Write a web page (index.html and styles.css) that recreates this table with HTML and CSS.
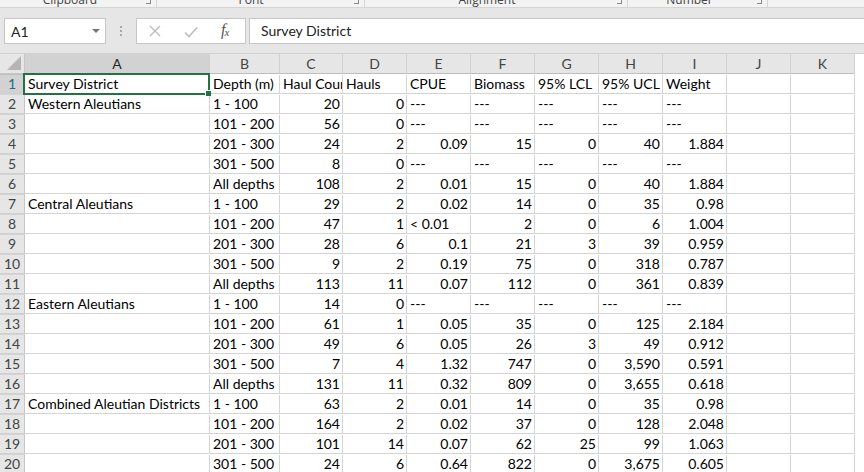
FILE: index.html
```html
<!DOCTYPE html>
<html>
<head>
<meta charset="utf-8">
<link rel="stylesheet" href="styles.css">
</head>
<body>
<div class="ribbon">
  <div class="grp g1"><span class="lbl">Clipboard</span><span class="launch"></span></div>
  <div class="grp g2"><span class="lbl">Font</span><span class="launch"></span></div>
  <div class="grp g3"><span class="lbl">Alignment</span><span class="launch"></span></div>
  <div class="grp g4"><span class="lbl">Number</span><span class="launch"></span></div>
</div>
<div class="fbar">
  <div class="namebox"><span>A1</span>
    <svg class="dd" width="8" height="5" viewBox="0 0 8 5"><polygon points="0,0 8,0 4,4" fill="#777"/></svg>
  </div>
  <div class="dots"><i></i><i></i><i></i></div>
  <div class="iconbox">
    <svg class="ic-x" width="12" height="12" viewBox="0 0 12 12"><path d="M1 1 L11 11 M11 1 L1 11" stroke="#bdbdbd" stroke-width="1.4" fill="none"/></svg>
    <svg class="ic-ok" width="14" height="12" viewBox="0 0 14 12"><path d="M1 6.5 L5 10.5 L13 1.5" stroke="#bdbdbd" stroke-width="1.6" fill="none"/></svg>
    <span class="fx">f<sub>x</sub></span>
  </div>
  <div class="finput">Survey District</div>
</div>
<div class="sheet">
  <div class="row hdr">
    <div class="corner"><svg width="14" height="14" viewBox="0 0 14 14"><polygon points="14,0 14,14 0,14" fill="#b4b4b4"/></svg></div>
    <div class="ch sel">A</div><div class="ch">B</div><div class="ch">C</div><div class="ch">D</div><div class="ch">E</div><div class="ch">F</div><div class="ch">G</div><div class="ch">H</div><div class="ch">I</div><div class="ch">J</div><div class="ch">K</div><div class="ch"></div>
  </div>
  <div class="row"><div class="rh selr">1</div><div class="c active">Survey District<span class="selbox"><span class="handle"></span></span></div><div class="c">Depth (m)</div><div class="c">Haul Count</div><div class="c">Hauls</div><div class="c">CPUE</div><div class="c">Biomass</div><div class="c">95% LCL</div><div class="c">95% UCL</div><div class="c">Weight</div><div class="c"></div><div class="c"></div><div class="c"></div></div>
  <div class="row"><div class="rh">2</div><div class="c">Western Aleutians</div><div class="c">1 - 100</div><div class="c n">20</div><div class="c n">0</div><div class="c">---</div><div class="c">---</div><div class="c">---</div><div class="c">---</div><div class="c">---</div><div class="c"></div><div class="c"></div><div class="c"></div></div>
  <div class="row"><div class="rh">3</div><div class="c"></div><div class="c">101 - 200</div><div class="c n">56</div><div class="c n">0</div><div class="c">---</div><div class="c">---</div><div class="c">---</div><div class="c">---</div><div class="c">---</div><div class="c"></div><div class="c"></div><div class="c"></div></div>
  <div class="row"><div class="rh">4</div><div class="c"></div><div class="c">201 - 300</div><div class="c n">24</div><div class="c n">2</div><div class="c n">0.09</div><div class="c n">15</div><div class="c n">0</div><div class="c n">40</div><div class="c n">1.884</div><div class="c"></div><div class="c"></div><div class="c"></div></div>
  <div class="row"><div class="rh">5</div><div class="c"></div><div class="c">301 - 500</div><div class="c n">8</div><div class="c n">0</div><div class="c">---</div><div class="c">---</div><div class="c">---</div><div class="c">---</div><div class="c">---</div><div class="c"></div><div class="c"></div><div class="c"></div></div>
  <div class="row"><div class="rh">6</div><div class="c"></div><div class="c">All depths</div><div class="c n">108</div><div class="c n">2</div><div class="c n">0.01</div><div class="c n">15</div><div class="c n">0</div><div class="c n">40</div><div class="c n">1.884</div><div class="c"></div><div class="c"></div><div class="c"></div></div>
  <div class="row"><div class="rh">7</div><div class="c">Central Aleutians</div><div class="c">1 - 100</div><div class="c n">29</div><div class="c n">2</div><div class="c n">0.02</div><div class="c n">14</div><div class="c n">0</div><div class="c n">35</div><div class="c n">0.98</div><div class="c"></div><div class="c"></div><div class="c"></div></div>
  <div class="row"><div class="rh">8</div><div class="c"></div><div class="c">101 - 200</div><div class="c n">47</div><div class="c n">1</div><div class="c">&lt; 0.01</div><div class="c n">2</div><div class="c n">0</div><div class="c n">6</div><div class="c n">1.004</div><div class="c"></div><div class="c"></div><div class="c"></div></div>
  <div class="row"><div class="rh">9</div><div class="c"></div><div class="c">201 - 300</div><div class="c n">28</div><div class="c n">6</div><div class="c n">0.1</div><div class="c n">21</div><div class="c n">3</div><div class="c n">39</div><div class="c n">0.959</div><div class="c"></div><div class="c"></div><div class="c"></div></div>
  <div class="row"><div class="rh">10</div><div class="c"></div><div class="c">301 - 500</div><div class="c n">9</div><div class="c n">2</div><div class="c n">0.19</div><div class="c n">75</div><div class="c n">0</div><div class="c n">318</div><div class="c n">0.787</div><div class="c"></div><div class="c"></div><div class="c"></div></div>
  <div class="row"><div class="rh">11</div><div class="c"></div><div class="c">All depths</div><div class="c n">113</div><div class="c n">11</div><div class="c n">0.07</div><div class="c n">112</div><div class="c n">0</div><div class="c n">361</div><div class="c n">0.839</div><div class="c"></div><div class="c"></div><div class="c"></div></div>
  <div class="row"><div class="rh">12</div><div class="c">Eastern Aleutians</div><div class="c">1 - 100</div><div class="c n">14</div><div class="c n">0</div><div class="c">---</div><div class="c">---</div><div class="c">---</div><div class="c">---</div><div class="c">---</div><div class="c"></div><div class="c"></div><div class="c"></div></div>
  <div class="row"><div class="rh">13</div><div class="c"></div><div class="c">101 - 200</div><div class="c n">61</div><div class="c n">1</div><div class="c n">0.05</div><div class="c n">35</div><div class="c n">0</div><div class="c n">125</div><div class="c n">2.184</div><div class="c"></div><div class="c"></div><div class="c"></div></div>
  <div class="row"><div class="rh">14</div><div class="c"></div><div class="c">201 - 300</div><div class="c n">49</div><div class="c n">6</div><div class="c n">0.05</div><div class="c n">26</div><div class="c n">3</div><div class="c n">49</div><div class="c n">0.912</div><div class="c"></div><div class="c"></div><div class="c"></div></div>
  <div class="row"><div class="rh">15</div><div class="c"></div><div class="c">301 - 500</div><div class="c n">7</div><div class="c n">4</div><div class="c n">1.32</div><div class="c n">747</div><div class="c n">0</div><div class="c n">3,590</div><div class="c n">0.591</div><div class="c"></div><div class="c"></div><div class="c"></div></div>
  <div class="row"><div class="rh">16</div><div class="c"></div><div class="c">All depths</div><div class="c n">131</div><div class="c n">11</div><div class="c n">0.32</div><div class="c n">809</div><div class="c n">0</div><div class="c n">3,655</div><div class="c n">0.618</div><div class="c"></div><div class="c"></div><div class="c"></div></div>
  <div class="row"><div class="rh">17</div><div class="c">Combined Aleutian Districts</div><div class="c">1 - 100</div><div class="c n">63</div><div class="c n">2</div><div class="c n">0.01</div><div class="c n">14</div><div class="c n">0</div><div class="c n">35</div><div class="c n">0.98</div><div class="c"></div><div class="c"></div><div class="c"></div></div>
  <div class="row"><div class="rh">18</div><div class="c"></div><div class="c">101 - 200</div><div class="c n">164</div><div class="c n">2</div><div class="c n">0.02</div><div class="c n">37</div><div class="c n">0</div><div class="c n">128</div><div class="c n">2.048</div><div class="c"></div><div class="c"></div><div class="c"></div></div>
  <div class="row"><div class="rh">19</div><div class="c"></div><div class="c">201 - 300</div><div class="c n">101</div><div class="c n">14</div><div class="c n">0.07</div><div class="c n">62</div><div class="c n">25</div><div class="c n">99</div><div class="c n">1.063</div><div class="c"></div><div class="c"></div><div class="c"></div></div>
  <div class="row"><div class="rh">20</div><div class="c"></div><div class="c">301 - 500</div><div class="c n">24</div><div class="c n">6</div><div class="c n">0.64</div><div class="c n">822</div><div class="c n">0</div><div class="c n">3,675</div><div class="c n">0.605</div><div class="c"></div><div class="c"></div><div class="c"></div></div>
</div>
</body>
</html>
```
FILE: styles.css
```css
html, body {
  margin: 0;
  padding: 0;
  width: 864px;
  height: 472px;
  overflow: hidden;
  background: #ffffff;
  font-family: "Lato", "Liberation Sans", sans-serif;
}

/* ribbon bottom strip */
.ribbon {
  height: 7px;
  background: #f3f3f3;
  border-bottom: 1px solid #d5d5d5;
  display: flex;
  overflow: hidden;
}
.grp {
  position: relative;
  height: 7px;
  border-right: 1px solid #d5d5d5;
  box-sizing: border-box;
  display: flex;
  justify-content: center;
}
.g1 { width: 157px; }
.g2 { width: 208px; }
.g3 { width: 263px; }
.g4 { width: 140px; }
.lbl {
  font-family: "Open Sans", sans-serif;
  font-size: 12px;
  line-height: 12px;
  color: #444;
  margin-top: -6px;
}
.g1 .lbl { margin-right: 16px; }
.g2 .lbl { margin-right: 19px; }
.g3 .lbl { margin-right: 18px; }
.g4 .lbl { margin-right: 16px; }
.launch {
  position: absolute;
  right: 5px;
  top: 0;
  width: 4px;
  height: 3px;
  border-right: 1px solid #888;
  border-bottom: 1px solid #888;
}

/* formula bar */
.fbar {
  height: 45px;
  background: #e6e6e6;
  box-sizing: border-box;
  padding: 10px 0 9px 4px;
  display: flex;
  align-items: stretch;
}
.namebox {
  width: 102px;
  height: 26px;
  box-sizing: border-box;
  background: #fff;
  border: 1px solid #c6c6c6;
  display: flex;
  align-items: center;
  justify-content: space-between;
  padding: 0 5px 0 6px;
  font-size: 14px;
  color: #222;
}
.dd { margin-top: 1px; }
.dots {
  width: 30px;
  display: flex;
  flex-direction: column;
  align-items: center;
  justify-content: center;
  gap: 2px;
}
.dots i {
  display: block;
  width: 2px;
  height: 2px;
  background: #a8a8a8;
}
.iconbox {
  width: 110px;
  height: 26px;
  box-sizing: border-box;
  background: #fff;
  border: 1px solid #c6c6c6;
  display: flex;
  align-items: center;
  padding-left: 12px;
}
.ic-x { margin-right: 23px; }
.ic-ok { margin-right: 23px; margin-top: 1px; }
.fx {
  font-family: "Liberation Serif", serif;
  font-style: italic;
  font-size: 16px;
  color: #555;
  line-height: 16px;
  letter-spacing: -1px;
}
.fx sub {
  font-size: 11px;
  vertical-align: -1px;
}
.finput {
  flex: 1;
  margin-left: 3px;
  height: 26px;
  box-sizing: border-box;
  background: #fff;
  border: 1px solid #c6c6c6;
  border-right: none;
  padding-left: 11px;
  font-size: 14px;
  line-height: 24px;
  color: #222;
}

/* sheet */
.sheet {
  width: 919px;
}
.row {
  display: grid;
  grid-template-columns: 25px 185px 70px 63px 64px 64px 64px 64px 64px 64px 64px 64px;
  height: 20px;
}
.row.hdr {
  height: 21px;
  border-top: 1px solid #d0d0d0;
}
.corner {
  background: #e6e6e6;
  border-right: 1px solid #c6c6c6;
  border-bottom: 1px solid #c6c6c6;
  box-sizing: border-box;
  display: flex;
  align-items: flex-end;
  justify-content: flex-end;
  padding: 0 3px 3px 0;
}
.ch {
  background: #e6e6e6;
  border-right: 1px solid #d0d0d0;
  border-bottom: 1px solid #bdbdbd;
  box-sizing: border-box;
  text-align: center;
  font-size: 14px;
  line-height: 19px;
  color: #444;
}
.ch.sel {
  background: #d2d2d2;
  color: #262626;
}
.rh {
  background: #e6e6e6;
  border-right: 1px solid #c6c6c6;
  border-bottom: 1px solid #d0d0d0;
  box-sizing: border-box;
  text-align: center;
  font-size: 14px;
  line-height: 18px;
  color: #444;
}
.rh.selr {
  background: #d2d2d2;
  color: #1d6b8f;
}
.c {
  border-right: 1px solid #d4d4d4;
  border-bottom: 1px solid #d4d4d4;
  box-sizing: border-box;
  padding: 0 2px 0 3px;
  overflow: hidden;
  white-space: nowrap;
  font-size: 14px;
  line-height: 18px;
  color: #000;
}
.c.n { text-align: right; }
.c.active {
  position: relative;
  overflow: visible;
}
.selbox {
  position: absolute;
  left: -2px;
  top: -2px;
  right: -1px;
  bottom: -2px;
  border: 2px solid #217346;
  pointer-events: none;
}
.handle {
  position: absolute;
  right: -3px;
  bottom: -3px;
  width: 5px;
  height: 5px;
  background: #217346;
  border: 1px solid #fff;
  border-right: none;
  border-bottom: none;
  box-sizing: content-box;
}
```
